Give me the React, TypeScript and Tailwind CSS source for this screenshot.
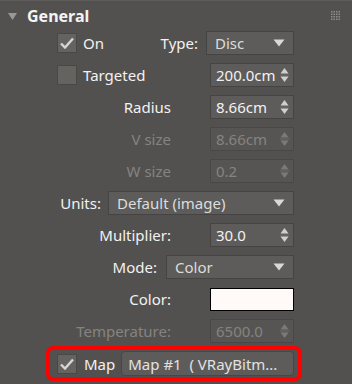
import React from 'react'

const FONT = { fontFamily: '"Noto Sans", "Open Sans", sans-serif' }

function Check({ on }: { on: boolean }) {
  return (
    <div className="w-[20px] h-[20px] bg-[#65635f] border border-[#4a4846] flex items-center justify-center">
      {on && (
        <svg width="14" height="12" viewBox="0 0 14 12">
          <path d="M1 6.5 L5 10.5 L13 1.5" fill="none" stroke="#d6d6d6" strokeWidth="2.4" strokeLinejoin="miter" />
        </svg>
      )}
    </div>
  )
}

function Dropdown({ value, width }: { value: string; width: number }) {
  return (
    <div
      className="h-[24px] bg-[#5e5c5a] border border-[#464442] flex items-center pl-[8px] pr-[8px] text-[#dcdcdc]"
      style={{ width }}
    >
      <span className="flex-1 leading-[20px] whitespace-nowrap">{value}</span>
      <svg width="12" height="8" viewBox="0 0 12 8">
        <path d="M0.5 0.5 H11.5 L6 7.5 Z" fill="#d8d8d8" />
      </svg>
    </div>
  )
}

function Spinner({ value, disabled }: { value: string; disabled?: boolean }) {
  const c = disabled ? '#7c7a78' : '#cfcfcf'
  return (
    <div
      className={`w-[84px] h-[24px] border flex items-center pl-[5px] pr-[4px] ${
        disabled ? 'bg-[#575553] border-[#4a4846] text-[#858381]' : 'bg-[#5e5c5a] border-[#464442] text-[#f2f2f2]'
      }`}
    >
      <span className="flex-1 leading-[20px] whitespace-nowrap">{value}</span>
      <svg width="9" height="16" viewBox="0 0 9 16">
        <path d="M4.5 1 L8.5 6.5 H0.5 Z" fill={c} />
        <rect x="0" y="7.5" width="9" height="1" fill="#6f6d6b" />
        <path d="M0.5 9.5 H8.5 L4.5 15 Z" fill={c} />
      </svg>
    </div>
  )
}

function Row({ children, className = '' }: { children: React.ReactNode; className?: string }) {
  return <div className={`h-[32px] flex items-center pl-[57px] pr-[58px] ${className}`}>{children}</div>
}

function SpinRow({ label, value, disabled }: { label: string; value: string; disabled?: boolean }) {
  return (
    <Row className="justify-end">
      <span className={`mr-[39px] leading-[20px] ${disabled ? 'text-[#858381]' : 'text-[#f2f2f2]'}`}>{label}</span>
      <Spinner value={value} disabled={disabled} />
    </Row>
  )
}

export default function App() {
  return (
    <div className="w-[352px] h-[384px] bg-[#53514f] overflow-hidden text-[15px] leading-[20px] border-t border-[#5f5d5b]" style={FONT}>
      <div className="h-[26px] flex items-center pl-[8px] pr-[11px] pt-[4px]">
        <svg width="9" height="7" viewBox="0 0 9 7" className="mr-[10px]">
          <path d="M0 0 H9 L4.5 7 Z" fill="#9a9896" />
        </svg>
        <span className="flex-1 font-bold text-[16px] text-[#f4f4f4]">General</span>
        <svg width="10" height="10" viewBox="0 0 10 10">
          {[0, 1, 2, 3].map(r =>
            [0, 1, 2, 3].map(c => <rect key={`${r}-${c}`} x={c * 2.5} y={r * 2.5} width="1.5" height="1.5" fill="#8e8c8a" />)
          )}
        </svg>
      </div>

      <Row>
        <Check on />
        <span className="ml-[6px] text-[#f2f2f2] flex-1">On</span>
        <span className="mr-[8px] text-[#f2f2f2]">Type:</span>
        <Dropdown value="Disc" width={88} />
      </Row>

      <Row>
        <Check on={false} />
        <span className="ml-[6px] text-[#f2f2f2] flex-1">Targeted</span>
        <Spinner value="200.0cm" />
      </Row>

      <SpinRow label="Radius" value="8.66cm" />
      <SpinRow label="V size" value="8.66cm" disabled />
      <SpinRow label="W size" value="0.2" disabled />

      <Row className="justify-end">
        <span className="mr-[7px] text-[#f2f2f2]">Units:</span>
        <Dropdown value="Default (image)" width={186} />
      </Row>

      <SpinRow label="Multiplier:" value="30.0" />

      <Row className="justify-end">
        <span className="mr-[9px] text-[#f2f2f2]">Mode:</span>
        <Dropdown value="Color" width={128} />
      </Row>

      <Row className="justify-end">
        <span className="mr-[39px] text-[#f2f2f2]">Color:</span>
        <div className="w-[84px] h-[23px] bg-[#fffaf8] border border-black" />
      </Row>

      <SpinRow label="Temperature:" value="6500.0" disabled />

      <div className="ml-[46px] mt-[-1px] w-[256px] h-[35px] border-[4px] border-[#ff0000] rounded-[7px] flex items-center pl-[7px] pr-[4px]">
        <Check on />
        <span className="ml-[7px] text-[#f2f2f2]">Map</span>
        <div className="ml-[6px] flex-1 h-[25px] bg-[#5e5c5a] border border-[#494745] rounded-[4px] flex items-center pl-[6px] text-[#e2e2e2] whitespace-pre">
          Map #1  ( VRayBitm...
        </div>
      </div>
    </div>
  )
}
